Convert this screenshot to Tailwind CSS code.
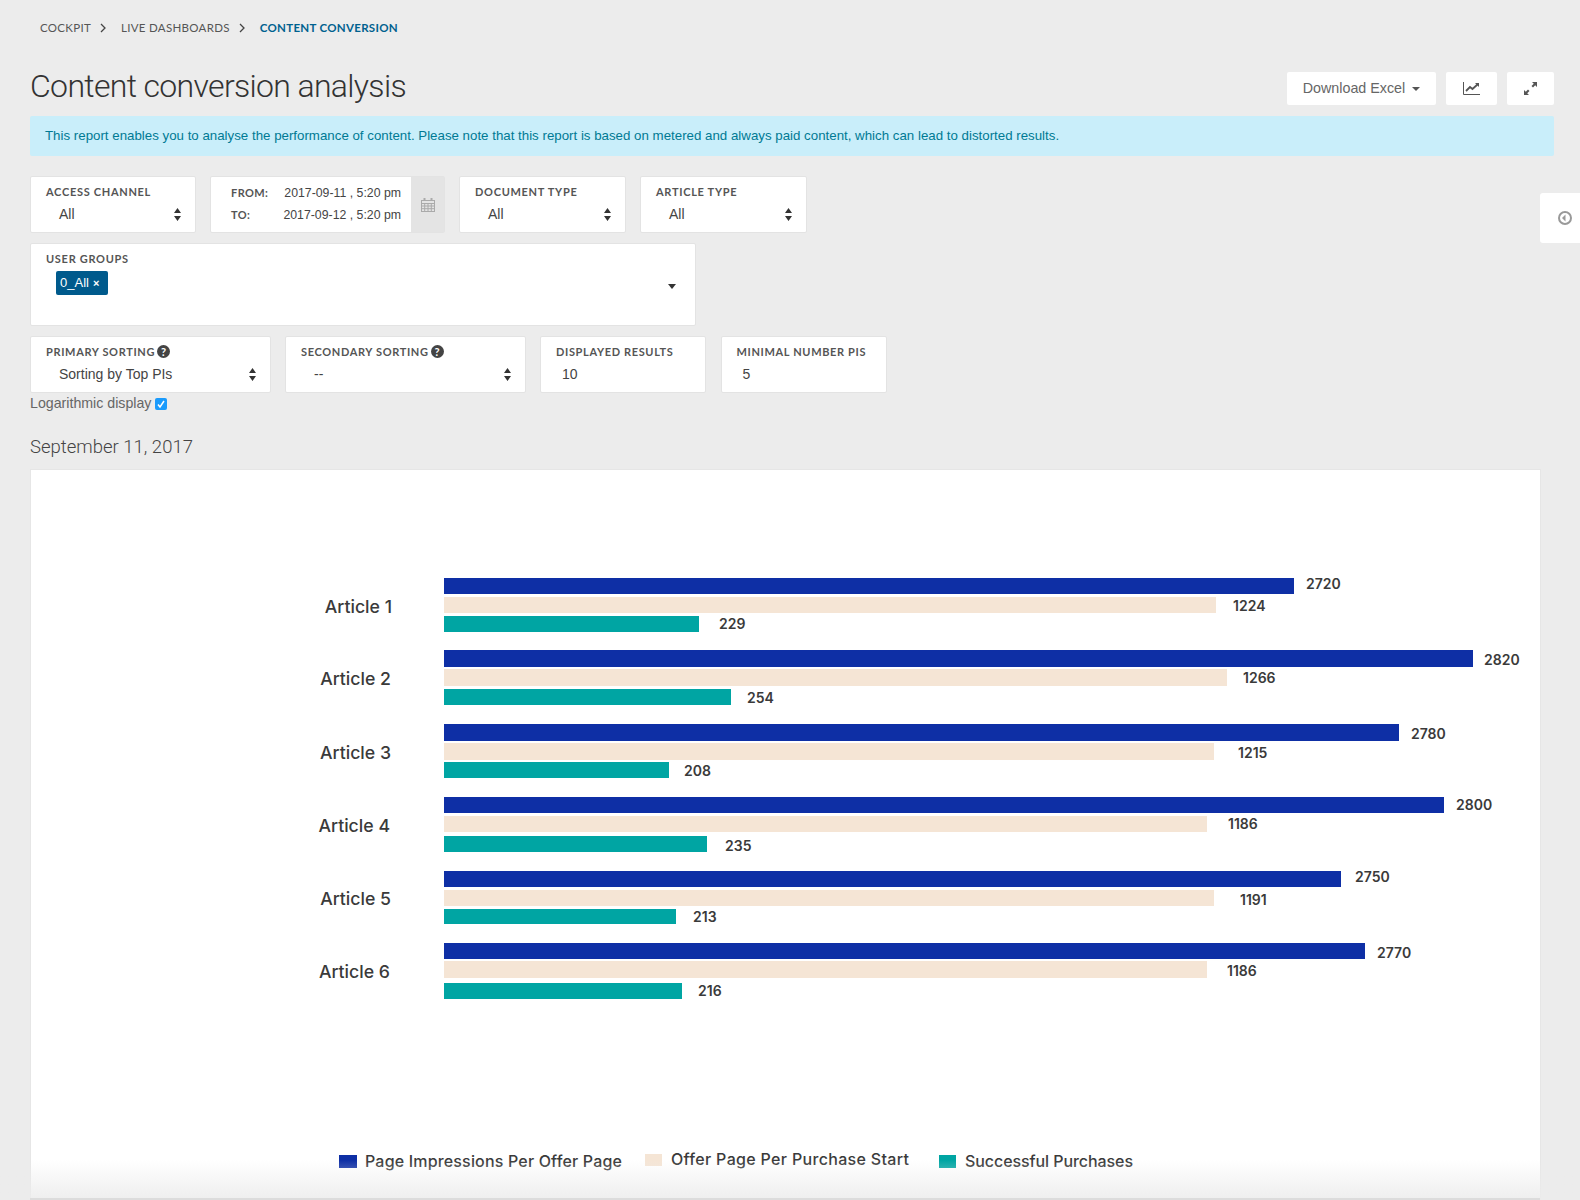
<!DOCTYPE html>
<html><head><meta charset="utf-8"><script src="https://cdn.jsdelivr.net/npm/@tailwindcss/browser@4"></script></head>
<body class="m-0">
<div class="relative h-[1200px] w-[1580px] overflow-hidden bg-[#ececec] font-['Liberation_Sans',sans-serif] text-[#444]">
 <div class="pl-[30px] pr-[26px] pt-[19px]">
  <nav class="flex h-[17px] items-center pl-[10px] font-['Lato',sans-serif] text-[11.5px] uppercase leading-none tracking-[0.3px] text-[#555]">
    <span>Cockpit</span>
    <svg class="ml-[9px] mr-[15px]" width="6" height="10" viewBox="0 0 6 10" fill="none" stroke="#444" stroke-width="1.3"><path d="M1 1l4 4-4 4"/></svg>
    <span>Live Dashboards</span>
    <svg class="ml-[9px] mr-[15px]" width="6" height="10" viewBox="0 0 6 10" fill="none" stroke="#444" stroke-width="1.3"><path d="M1 1l4 4-4 4"/></svg>
    <span class="font-bold text-[#00618f]">Content Conversion</span>
  </nav>
  <div class="mt-[29px] flex h-[42px] items-center justify-between">
    <h1 class="m-0 font-['Roboto',sans-serif] text-[32px] font-light leading-none tracking-[-0.67px] text-[#333]">Content conversion analysis</h1>
    <div class="mt-[5px] flex gap-[10px]">
      <button class="flex h-[33px] w-[149px] items-center justify-center gap-[7px] rounded-[2px] bg-white text-[14.3px] text-[#666]">Download Excel<span class="mt-[1px] h-0 w-0 border-x-[4px] border-t-[4px] border-x-transparent border-t-[#555]"></span></button>
      <button class="flex h-[33px] w-[51px] items-center justify-center rounded-[2px] bg-white"><svg width="17" height="13" viewBox="0 0 17 13" fill="none" stroke="#555"><path d="M.5 0v12.500H17" stroke-width="1"/><path d="M3 9l4-4 2.500 2L15 2" stroke-width="1.800"/><path d="M12 1h4v4z" fill="#555" stroke="none"/></svg></button>
      <button class="flex h-[33px] w-[47px] items-center justify-center rounded-[2px] bg-white"><svg width="13" height="13" viewBox="0 0 13 13" fill="#555"><path d="M8 0h5v5l-1.800-1.800L9 5.500 7.500 4l2.300-2.300zM5 13H0V8l1.800 1.800L4 7.500 5.500 9l-2.300 2.300z"/></svg></button>
    </div>
  </div>
  <div class="mt-[9px] flex h-[40px] items-center rounded-[2px] bg-[#c9eefa] pl-[15px] text-[13.3px] text-[#007a94]">This report enables you to analyse the performance of content. Please note that this report is based on metered and always paid content, which can lead to distorted results.</div>

  <div class="mt-[20px] flex gap-[14px]">
    <div class="h-[57px] w-[166px] rounded-[2px] border border-[#e3e3e3] bg-white pl-[15px] pr-[14px] pt-[8px]">
      <div class="font-['Lato',sans-serif] text-[11px] font-bold uppercase leading-[13px] tracking-[0.7px] text-[#555]">Access channel</div>
      <div class="mt-[8px] flex items-center justify-between pl-[13px] text-[14px] leading-[16px]"><span>All</span><svg width="7" height="13" viewBox="0 0 7 13" fill="#333"><path d="M3.500 0L7 5H0zM3.500 13L0 8h7z"/></svg></div>
    </div>
    <div class="flex h-[57px] w-[235px] rounded-[2px] border border-[#e3e3e3] bg-white">
      <div class="flex-1 pl-[20px] pr-[10px] pt-[5px] text-[12.3px] leading-[22px]">
        <div class="flex justify-between"><span class="font-['Lato',sans-serif] text-[11px] font-bold uppercase tracking-[0.4px] text-[#555]">From:</span><span>2017-09-11 , 5:20 pm</span></div>
        <div class="flex justify-between"><span class="font-['Lato',sans-serif] text-[11px] font-bold uppercase tracking-[0.4px] text-[#555]">To:</span><span>2017-09-12 , 5:20 pm</span></div>
      </div>
      <div class="flex w-[33px] items-center justify-center bg-[#e4e4e4]"><svg width="14" height="14" viewBox="0 0 14 14" fill="none" stroke="#aaa"><rect x=".5" y="2.500" width="13" height="11"/><path d="M.5 5.500h13M.5 8h13M.5 10.700h13M3.700 5.500v8M7 5.500v8M10.300 5.500v8"/><path d="M3.500 0v3M10.500 0v3" stroke-width="2"/></svg></div>
    </div>
    <div class="h-[57px] w-[167px] rounded-[2px] border border-[#e3e3e3] bg-white pl-[15px] pr-[14px] pt-[8px]">
      <div class="font-['Lato',sans-serif] text-[11px] font-bold uppercase leading-[13px] tracking-[0.7px] text-[#555]">Document type</div>
      <div class="mt-[8px] flex items-center justify-between pl-[13px] text-[14px] leading-[16px]"><span>All</span><svg width="7" height="13" viewBox="0 0 7 13" fill="#333"><path d="M3.500 0L7 5H0zM3.500 13L0 8h7z"/></svg></div>
    </div>
    <div class="h-[57px] w-[167px] rounded-[2px] border border-[#e3e3e3] bg-white pl-[15px] pr-[14px] pt-[8px]">
      <div class="font-['Lato',sans-serif] text-[11px] font-bold uppercase leading-[13px] tracking-[0.7px] text-[#555]">Article type</div>
      <div class="mt-[8px] flex items-center justify-between pl-[13px] text-[14px] leading-[16px]"><span>All</span><svg width="7" height="13" viewBox="0 0 7 13" fill="#333"><path d="M3.500 0L7 5H0zM3.500 13L0 8h7z"/></svg></div>
    </div>
  </div>

  <div class="mt-[10px] flex h-[83px] w-[666px] rounded-[2px] border border-[#e3e3e3] bg-white pl-[15px] pr-[19px] pt-[8px]">
    <div class="flex-1">
      <div class="font-['Lato',sans-serif] text-[11px] font-bold uppercase leading-[13px] tracking-[0.7px] text-[#555]">User groups</div>
      <div class="ml-[10px] mt-[6px] flex h-[24px] w-[52px] items-center gap-[4px] rounded-[2px] bg-[#005a8c] pl-[4px] text-[13px] text-white">0_All<span class="text-[11px] font-bold">×</span></div>
    </div>
    <span class="mt-[32px] h-0 w-0 border-x-[4px] border-t-[5px] border-x-transparent border-t-[#333]"></span>
  </div>

  <div class="mt-[10px] flex gap-[14.5px]">
    <div class="h-[57px] w-[240.5px] rounded-[2px] border border-[#e3e3e3] bg-white pl-[15px] pr-[14px] pt-[8px]">
      <div class="flex items-center gap-[2px] font-['Lato',sans-serif] text-[11px] font-bold uppercase leading-[13px] tracking-[0.65px] text-[#555]">Primary sorting<span class="flex h-[13px] w-[13px] items-center justify-center rounded-full bg-[#444] text-[11px] leading-none tracking-normal text-white">?</span></div>
      <div class="mt-[8px] flex items-center justify-between pl-[13px] text-[14px] leading-[16px]"><span>Sorting by Top PIs</span><svg width="7" height="13" viewBox="0 0 7 13" fill="#333"><path d="M3.500 0L7 5H0zM3.500 13L0 8h7z"/></svg></div>
    </div>
    <div class="h-[57px] w-[240.5px] rounded-[2px] border border-[#e3e3e3] bg-white pl-[15px] pr-[14px] pt-[8px]">
      <div class="flex items-center gap-[2px] font-['Lato',sans-serif] text-[11px] font-bold uppercase leading-[13px] tracking-[0.65px] text-[#555]">Secondary sorting<span class="flex h-[13px] w-[13px] items-center justify-center rounded-full bg-[#444] text-[11px] leading-none tracking-normal text-white">?</span></div>
      <div class="mt-[8px] flex items-center justify-between pl-[13px] text-[14px] leading-[16px]"><span>--</span><svg width="7" height="13" viewBox="0 0 7 13" fill="#333"><path d="M3.500 0L7 5H0zM3.500 13L0 8h7z"/></svg></div>
    </div>
    <div class="h-[57px] w-[166px] rounded-[2px] border border-[#e3e3e3] bg-white pl-[15px] pt-[8px]">
      <div class="font-['Lato',sans-serif] text-[11px] font-bold uppercase leading-[13px] tracking-[0.65px] text-[#555]">Displayed results</div>
      <div class="mt-[8px] pl-[6px] text-[14px] leading-[16px]">10</div>
    </div>
    <div class="h-[57px] w-[166px] rounded-[2px] border border-[#e3e3e3] bg-white pl-[15px] pt-[8px]">
      <div class="font-['Lato',sans-serif] text-[11px] font-bold uppercase leading-[13px] tracking-[0.65px] text-[#555]">Minimal number PIs</div>
      <div class="mt-[8px] pl-[6px] text-[14px] leading-[16px]">5</div>
    </div>
  </div>

  <div class="mt-[3px] flex h-[16px] items-center gap-[4px] text-[14.2px] text-[#666]">Logarithmic display<svg width="12" height="12" viewBox="0 0 12 12"><rect width="12" height="12" rx="2" fill="#1a9bfc"/><path d="M3 6.500l2 2.500 4-6" fill="none" stroke="#fff" stroke-width="1.500"/></svg></div>
  <div class="mt-[23px] font-['Roboto',sans-serif] text-[18.5px] font-light leading-[24px] text-[#444]">September 11, 2017</div>

  <div class="mt-[10px] h-[740px] w-[1511px] border border-[#e6e6e6] bg-white">
    <svg class="block font-['Inter',sans-serif]" width="1509" height="738" viewBox="31 470 1509 738">
      <g fill="#0e2fa5">
        <rect x="444" y="578" width="850" height="16"/><rect x="444" y="650" width="1029" height="17"/><rect x="444" y="724" width="955" height="17"/><rect x="444" y="797" width="1000" height="16"/><rect x="444" y="871" width="897" height="16"/><rect x="444" y="943" width="921" height="16"/>
        <rect x="339" y="1155" width="18" height="13"/>
      </g>
      <g fill="#f5e5d5">
        <rect x="444" y="597" width="772" height="16"/><rect x="444" y="669" width="783" height="17"/><rect x="444" y="743" width="770" height="17"/><rect x="444" y="816" width="763" height="16"/><rect x="444" y="890" width="770" height="16"/><rect x="444" y="961" width="763" height="17"/>
        <rect x="645" y="1154" width="17" height="12"/>
      </g>
      <g fill="#00a5a3">
        <rect x="444" y="616" width="255" height="16"/><rect x="444" y="689" width="287" height="16"/><rect x="444" y="762" width="225" height="16"/><rect x="444" y="836" width="263" height="16"/><rect x="444" y="909" width="232" height="15"/><rect x="444" y="983" width="238" height="16"/>
        <rect x="939" y="1155" width="17" height="13"/>
      </g>
      <g fill="#3a3a3a" font-size="17.7" font-weight="500" text-anchor="end">
        <text x="392" y="613">Article 1</text><text x="391" y="685">Article 2</text><text x="391" y="759">Article 3</text><text x="390" y="832">Article 4</text><text x="391" y="905">Article 5</text><text x="390" y="978">Article 6</text>
      </g>
      <g fill="#3a3a3a" font-size="14" font-weight="600">
        <text x="1306" y="589">2720</text><text x="1233" y="611">1224</text><text x="719" y="629">229</text>
        <text x="1484" y="665">2820</text><text x="1243" y="683">1266</text><text x="747" y="703">254</text>
        <text x="1411" y="739">2780</text><text x="1238" y="758">1215</text><text x="684" y="776">208</text>
        <text x="1456" y="810">2800</text><text x="1228" y="829">1186</text><text x="725" y="851">235</text>
        <text x="1355" y="882">2750</text><text x="1240" y="905">1191</text><text x="693" y="922">213</text>
        <text x="1377" y="958">2770</text><text x="1227" y="976">1186</text><text x="698" y="996">216</text>
      </g>
      <g fill="#3a3a3a" font-size="16" font-weight="500">
        <text x="365" y="1167" textLength="257">Page Impressions Per Offer Page</text>
        <text x="671" y="1165" textLength="238">Offer Page Per Purchase Start</text>
        <text x="965" y="1167" textLength="168">Successful Purchases</text>
      </g>
    </svg>
  </div>
 </div>
 <div class="absolute left-[1540px] top-[193px] flex h-[50px] w-[40px] items-center rounded-l-[3px] bg-white pl-[18px]"><svg width="14" height="14" viewBox="0 0 14 14"><circle cx="7" cy="7" r="6" fill="none" stroke="#999" stroke-width="2"/><path d="M7.500 3.500v7L4 7z" fill="#999"/></svg></div>
 <div class="absolute bottom-0 left-0 h-[40px] w-full bg-gradient-to-b from-transparent to-[#ececec]/90"></div>
 <div class="absolute bottom-0 left-[30px] h-[2px] w-[1510px] bg-[#dcdcdc]"></div>
</div>
</body></html>
